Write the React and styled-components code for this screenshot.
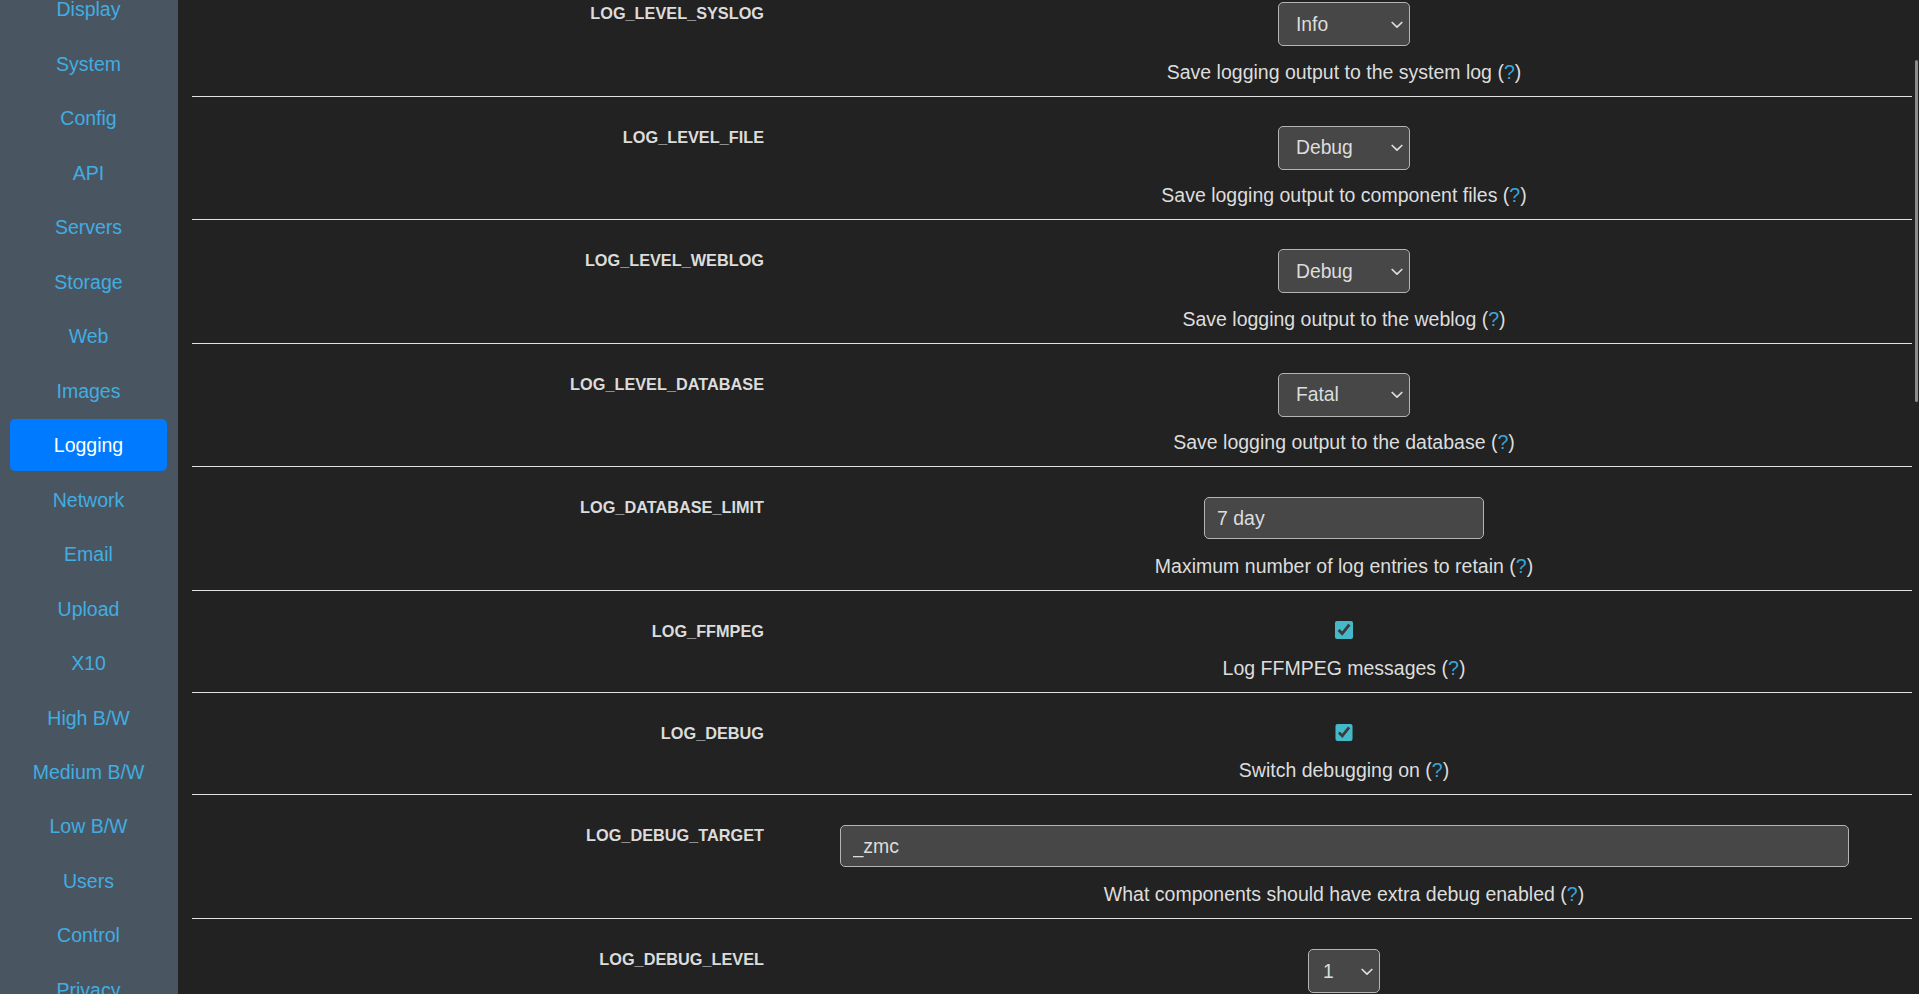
import React from "react";
import styled, { createGlobalStyle } from "styled-components";

const GlobalStyle = createGlobalStyle`
  html, body {
    margin: 0;
    padding: 0;
    background: #222222;
    overflow: hidden;
  }
  body {
    font-family: "Liberation Sans", Arial, sans-serif;
    color: #dddddd;
  }
  * { box-sizing: border-box; }
`;

const Page = styled.div`
  display: flex;
  height: 100vh;
  overflow: hidden;
`;

const Sidebar = styled.nav`
  width: 178px;
  flex-shrink: 0;
  background: #4a5562;
  padding: 0 11px 0 10px;
  overflow: hidden;
`;

const NavList = styled.ul`
  list-style: none;
  margin: -16.4px 0 0 0;
  padding: 0;
  display: flex;
  flex-direction: column;
  gap: 2.5px;
`;

const NavItem = styled.li`
  padding: 11.6px 0;
  text-align: center;
  font-size: 19.5px;
  line-height: 28.8px;
  border-radius: 5px;
  color: ${(p) => (p.$active ? "#ffffff" : "#41ade0")};
  background: ${(p) => (p.$active ? "#007bff" : "transparent")};
`;

const Main = styled.main`
  flex: 1;
  position: relative;
  padding: 0 7px 0 14px;
  overflow: hidden;
`;

const ScrollThumb = styled.div`
  position: absolute;
  right: 1px;
  top: 60px;
  width: 3.5px;
  height: 342px;
  border-radius: 2px;
  background: #8b8b8b;
`;

const Rows = styled.div`
  margin-top: -27.7px;
  display: flex;
  flex-direction: column;
`;

const Row = styled.div`
  display: grid;
  grid-template-columns: 584px 1fr;
  border-top: 1px solid #e2e2e2;
`;

const Label = styled.div`
  text-align: right;
  padding: 27.8px 12px 0 0;
  font-size: 16.3px;
  line-height: 24px;
  font-weight: bold;
  color: #dcdcdc;
`;

const ValueCell = styled.div`
  display: flex;
  flex-direction: column;
  align-items: center;
  padding: 29px 0 9.4px;
`;

const SelectWrap = styled.div`
  position: relative;
  width: ${(p) => p.$width}px;
  margin: ${(p) => (p.$last ? "1px" : "0")} 0 11.3px;
`;

const Select = styled.select`
  appearance: none;
  -webkit-appearance: none;
  width: 100%;
  height: 44px;
  padding: 0 26px 0 ${(p) => p.$pl}px;
  background: #474747;
  color: #dddddd;
  border: 1px solid #b4b4b4;
  border-radius: 5px;
  font-family: "Liberation Sans", Arial, sans-serif;
  font-size: 19.3px;
  outline: none;
`;

const Chevron = styled.svg`
  position: absolute;
  right: 7px;
  top: 50%;
  width: 12px;
  height: 8px;
  margin-top: -3.5px;
  pointer-events: none;
`;

const TextInput = styled.input`
  width: ${(p) => p.$width}px;
  height: 42px;
  margin: 1px 0 12.5px;
  padding: 0 12px;
  background: #474747;
  color: #dddddd;
  border: 1px solid #b4b4b4;
  border-radius: 5px;
  font-family: "Liberation Sans", Arial, sans-serif;
  font-size: 19.5px;
  outline: none;
`;

const Checkbox = styled.input`
  width: 17.4px;
  height: 17.4px;
  margin: 1.5px 0 15.2px;
  accent-color: #45b8c9;
`;

const Desc = styled.div`
  font-size: 19.5px;
  line-height: 28.8px;
  color: #dddddd;
  text-align: center;
`;

const HelpLink = styled.a`
  color: #38a6dc;
  text-decoration: none;
`;

const navItems = [
  "Display", "System", "Config", "API", "Servers", "Storage", "Web", "Images",
  "Logging", "Network", "Email", "Upload", "X10", "High B/W", "Medium B/W",
  "Low B/W", "Users", "Control", "Privacy",
];

const levels = ["None", "Panic", "Fatal", "Error", "Warning", "Info", "Debug"];

const rows = [
  { name: "LOG_LEVEL_SYSLOG", type: "select", value: "Info", width: 132, desc: "Save logging output to the system log" },
  { name: "LOG_LEVEL_FILE", type: "select", value: "Debug", width: 132, desc: "Save logging output to component files" },
  { name: "LOG_LEVEL_WEBLOG", type: "select", value: "Debug", width: 132, desc: "Save logging output to the weblog" },
  { name: "LOG_LEVEL_DATABASE", type: "select", value: "Fatal", width: 132, desc: "Save logging output to the database" },
  { name: "LOG_DATABASE_LIMIT", type: "text", value: "7 day", width: 280, desc: "Maximum number of log entries to retain" },
  { name: "LOG_FFMPEG", type: "check", value: true, desc: "Log FFMPEG messages" },
  { name: "LOG_DEBUG", type: "check", value: true, desc: "Switch debugging on" },
  { name: "LOG_DEBUG_TARGET", type: "text", value: "_zmc", width: 1009, desc: "What components should have extra debug enabled" },
  { name: "LOG_DEBUG_LEVEL", type: "level", value: "1", width: 72, desc: "What level of debugging should be enabled" },
  { name: "LOG_DEBUG_FILE", type: "text", value: "", width: 1009, desc: "Where the debug log will be written to" },
];

function Control({ row }) {
  if (row.type === "select" || row.type === "level") {
    const opts = row.type === "level" ? ["1", "2", "3", "4", "5", "6", "7", "8", "9"] : levels;
    return (
      <SelectWrap $width={row.width} $last={row.type === "level"}>
        <Select defaultValue={row.value} $pl={row.type === "level" ? 14 : 17}>
          {opts.map((o) => (
            <option key={o} value={o}>{o}</option>
          ))}
        </Select>
        <Chevron viewBox="0 0 12 8">
          <polyline points="1.2,1.5 6,6.2 10.8,1.5" fill="none" stroke="#dddddd" strokeWidth="1.7" strokeLinecap="round" strokeLinejoin="round" />
        </Chevron>
      </SelectWrap>
    );
  }
  if (row.type === "text") {
    return <TextInput type="text" defaultValue={row.value} $width={row.width} />;
  }
  return <Checkbox type="checkbox" defaultChecked={row.value} />;
}

export default function App() {
  return (
    <>
      <GlobalStyle />
      <Page>
        <Sidebar>
          <NavList>
            {navItems.map((n) => (
              <NavItem key={n} $active={n === "Logging"}>{n}</NavItem>
            ))}
          </NavList>
        </Sidebar>
        <Main>
          <Rows>
            {rows.map((r) => (
              <Row key={r.name}>
                <Label>{r.name}</Label>
                <ValueCell>
                  <Control row={r} />
                  <Desc>
                    {r.desc} (<HelpLink href="#">?</HelpLink>)
                  </Desc>
                </ValueCell>
              </Row>
            ))}
          </Rows>
          <ScrollThumb />
        </Main>
      </Page>
    </>
  );
}
